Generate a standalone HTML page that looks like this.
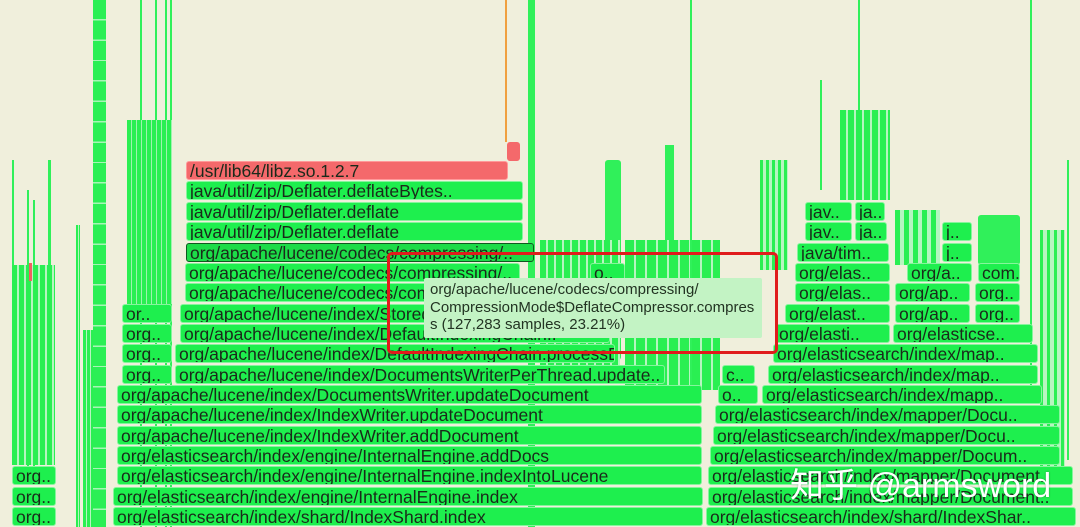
<!DOCTYPE html>
<html><head><meta charset="utf-8"><style>
body{margin:0;width:1080px;height:527px;background:#f0efdc;overflow:hidden;position:relative;font-family:"Liberation Sans","DejaVu Sans",sans-serif}
.b{position:absolute;height:19px;background:#1eef4e;border:1px solid #86f59c;border-radius:3px;box-sizing:border-box;font-size:17.5px;line-height:18px;color:#1a2a1a;padding-left:3px;white-space:nowrap;overflow:hidden}
.s{position:absolute;background:#30f05a}
.r{background:#f4696b;border-color:#f99}
.d{background:#1cdc48;border-color:#0f5a1f}
</style></head><body>
<div class="s" style="left:93px;top:0;width:13px;height:527px;background:repeating-linear-gradient(#2bef55 0 19px,#a8f5b6 19px 20.4px)"></div>
<div class="s" style="left:140px;top:0;width:2px;height:527px"></div>
<div class="s" style="left:155px;top:0;width:2px;height:527px"></div>
<div class="s" style="left:165px;top:0;width:2px;height:527px"></div>
<div class="s" style="left:170px;top:0;width:2px;height:527px"></div>
<div class="s" style="left:127px;top:120px;width:45px;height:184px;background:repeating-linear-gradient(90deg,#2aef52 0 4px,#9ff3ae 4px 5px)"></div>
<div class="s" style="left:12px;top:160px;width:2px;height:300px"></div>
<div class="s" style="left:27px;top:190px;width:2px;height:280px"></div>
<div class="s" style="left:33px;top:200px;width:2px;height:270px"></div>
<div class="s" style="left:48px;top:160px;width:3px;height:300px"></div>
<div class="s" style="left:12px;top:265px;width:43px;height:200px;background:repeating-linear-gradient(90deg,#2aef52 0 5px,#b7f5c0 5px 7px)"></div>
<div class="s" style="left:29px;top:263px;width:3px;height:18px;background:#f06060"></div>
<div class="s" style="left:76px;top:225px;width:4px;height:302px;background:repeating-linear-gradient(90deg,#2aef52 0 2px,#b7f5c0 2px 3px)"></div>
<div class="s" style="left:83px;top:330px;width:10px;height:197px;background:repeating-linear-gradient(90deg,#2aef52 0 3px,#b7f5c0 3px 4px)"></div>
<div class="s" style="left:505px;top:0;width:2px;height:142px;background:#f0a040"></div>
<div class="s" style="left:528px;top:0;width:7px;height:527px"></div>
<div class="s" style="left:507px;top:142px;width:13px;height:19px;background:#f4696b;border-radius:3px"></div>
<div class="s" style="left:605px;top:160px;width:16px;height:200px;border-radius:3px"></div>
<div class="s" style="left:665px;top:145px;width:9px;height:215px"></div>
<div class="s" style="left:540px;top:240px;width:80px;height:140px;background:repeating-linear-gradient(90deg,#2aef52 0 6px,#b7f5c0 6px 8px)"></div>
<div class="s" style="left:625px;top:240px;width:95px;height:150px;background:repeating-linear-gradient(90deg,#2aef52 0 9px,#b7f5c0 9px 11px)"></div>
<div class="s" style="left:690px;top:0;width:2px;height:400px"></div>
<div class="s" style="left:820px;top:80px;width:2px;height:110px"></div>
<div class="s" style="left:840px;top:110px;width:50px;height:90px;background:repeating-linear-gradient(90deg,#2aef52 0 6px,#b7f5c0 6px 8px)"></div>
<div class="s" style="left:858px;top:0;width:2px;height:110px"></div>
<div class="s" style="left:760px;top:160px;width:28px;height:110px;background:repeating-linear-gradient(90deg,#2aef52 0 3px,#b7f5c0 3px 6px)"></div>
<div class="s" style="left:895px;top:210px;width:45px;height:55px;background:repeating-linear-gradient(90deg,#2aef52 0 5px,#b7f5c0 5px 9px)"></div>
<div class="s" style="left:978px;top:215px;width:42px;height:50px;border-radius:3px"></div>
<div class="s" style="left:1030px;top:0;width:2px;height:400px"></div>
<div class="s" style="left:1040px;top:230px;width:25px;height:240px;background:repeating-linear-gradient(90deg,#2aef52 0 3px,#b7f5c0 3px 7px)"></div>
<div class="s" style="left:1067px;top:160px;width:2px;height:300px"></div>

<div class="b r" style="left:186px;top:161px;width:322px">/usr/lib64/libz.so.1.2.7</div>
<div class="b" style="left:186px;top:181px;width:337px">java/util/zip/Deflater.deflateBytes..</div>
<div class="b" style="left:186px;top:202px;width:337px">java/util/zip/Deflater.deflate</div>
<div class="b" style="left:186px;top:222px;width:337px">java/util/zip/Deflater.deflate</div>
<div class="b d" style="left:186px;top:243px;width:348px">org/apache/lucene/codecs/compressing/..</div>
<div class="b" style="left:185px;top:263px;width:335px">org/apache/lucene/codecs/compressing/..</div>
<div class="b" style="left:185px;top:283px;width:335px">org/apache/lucene/codecs/compressing/..</div>
<div class="b" style="left:122px;top:304px;width:50px">or..</div>
<div class="b" style="left:180px;top:304px;width:430px">org/apache/lucene/index/StoredFieldsConsumer..</div>
<div class="b" style="left:122px;top:324px;width:50px">org..</div>
<div class="b" style="left:180px;top:324px;width:430px">org/apache/lucene/index/DefaultIndexingChain..</div>
<div class="b" style="left:122px;top:344px;width:50px">org..</div>
<div class="b" style="left:175px;top:344px;width:440px">org/apache/lucene/index/DefaultIndexingChain.processDoc..</div>
<div class="b" style="left:122px;top:365px;width:50px">org..</div>
<div class="b" style="left:175px;top:365px;width:490px">org/apache/lucene/index/DocumentsWriterPerThread.update..</div>
<div class="b" style="left:117px;top:385px;width:585px">org/apache/lucene/index/DocumentsWriter.updateDocument</div>
<div class="b" style="left:117px;top:405px;width:585px">org/apache/lucene/index/IndexWriter.updateDocument</div>
<div class="b" style="left:117px;top:426px;width:585px">org/apache/lucene/index/IndexWriter.addDocument</div>
<div class="b" style="left:117px;top:446px;width:585px">org/elasticsearch/index/engine/InternalEngine.addDocs</div>
<div class="b" style="left:117px;top:466px;width:585px">org/elasticsearch/index/engine/InternalEngine.indexIntoLucene</div>
<div class="b" style="left:113px;top:487px;width:590px">org/elasticsearch/index/engine/InternalEngine.index</div>
<div class="b" style="left:113px;top:507px;width:590px">org/elasticsearch/index/shard/IndexShard.index</div>
<div class="b" style="left:12px;top:466px;width:44px">org..</div>
<div class="b" style="left:12px;top:487px;width:44px">org..</div>
<div class="b" style="left:12px;top:507px;width:44px">org..</div>
<div class="b" style="left:590px;top:263px;width:35px">o..</div>

<div class="b" style="left:805px;top:202px;width:47px">jav..</div>
<div class="b" style="left:855px;top:202px;width:30px">ja..</div>
<div class="b" style="left:805px;top:222px;width:47px">jav..</div>
<div class="b" style="left:855px;top:222px;width:32px">ja..</div>
<div class="b" style="left:942px;top:222px;width:30px">j..</div>
<div class="b" style="left:797px;top:243px;width:92px">java/tim..</div>
<div class="b" style="left:942px;top:243px;width:30px">j..</div>
<div class="b" style="left:795px;top:263px;width:95px">org/elas..</div>
<div class="b" style="left:907px;top:263px;width:65px">org/a..</div>
<div class="b" style="left:978px;top:263px;width:42px">com..</div>
<div class="b" style="left:795px;top:283px;width:95px">org/elas..</div>
<div class="b" style="left:895px;top:283px;width:75px">org/ap..</div>
<div class="b" style="left:975px;top:283px;width:45px">org..</div>
<div class="b" style="left:785px;top:304px;width:105px">org/elast..</div>
<div class="b" style="left:895px;top:304px;width:75px">org/ap..</div>
<div class="b" style="left:975px;top:304px;width:45px">org..</div>
<div class="b" style="left:775px;top:324px;width:115px">org/elasti..</div>
<div class="b" style="left:893px;top:324px;width:140px">org/elasticse..</div>
<div class="b" style="left:773px;top:344px;width:265px">org/elasticsearch/index/map..</div>
<div class="b" style="left:722px;top:365px;width:33px">c..</div>
<div class="b" style="left:768px;top:365px;width:270px">org/elasticsearch/index/map..</div>
<div class="b" style="left:718px;top:385px;width:40px">o..</div>
<div class="b" style="left:762px;top:385px;width:280px">org/elasticsearch/index/mapp..</div>
<div class="b" style="left:715px;top:405px;width:345px">org/elasticsearch/index/mapper/Docu..</div>
<div class="b" style="left:713px;top:426px;width:347px">org/elasticsearch/index/mapper/Docu..</div>
<div class="b" style="left:710px;top:446px;width:350px">org/elasticsearch/index/mapper/Docum..</div>
<div class="b" style="left:708px;top:466px;width:365px">org/elasticsearch/index/mapper/Document..</div>
<div class="b" style="left:708px;top:487px;width:365px">org/elasticsearch/index/mapper/Document..</div>
<div class="b" style="left:706px;top:507px;width:370px">org/elasticsearch/index/shard/IndexShar..</div>

<div style="position:absolute;left:424px;top:278px;width:338px;height:60px;background:#c3f3c4;box-sizing:border-box;padding:3px 6px;font-size:15px;line-height:17.5px;color:#223322;border-radius:2px;white-space:nowrap;overflow:hidden">org/apache/lucene/codecs/compressing/<br>CompressionMode$DeflateCompressor.compres<br>s (127,283 samples, 23.21%)</div>
<div style="position:absolute;left:387px;top:252px;width:391px;height:102px;border:3px solid #e01c1c;border-radius:5px;box-sizing:border-box"></div>

<div style="position:absolute;left:790px;top:458px;font-size:34px;color:#fff;font-family:'Liberation Sans','Noto Sans CJK SC',sans-serif;white-space:nowrap;text-shadow:0 0 2px rgba(0,0,0,.3)">知乎 @armsword</div>
</body></html>
